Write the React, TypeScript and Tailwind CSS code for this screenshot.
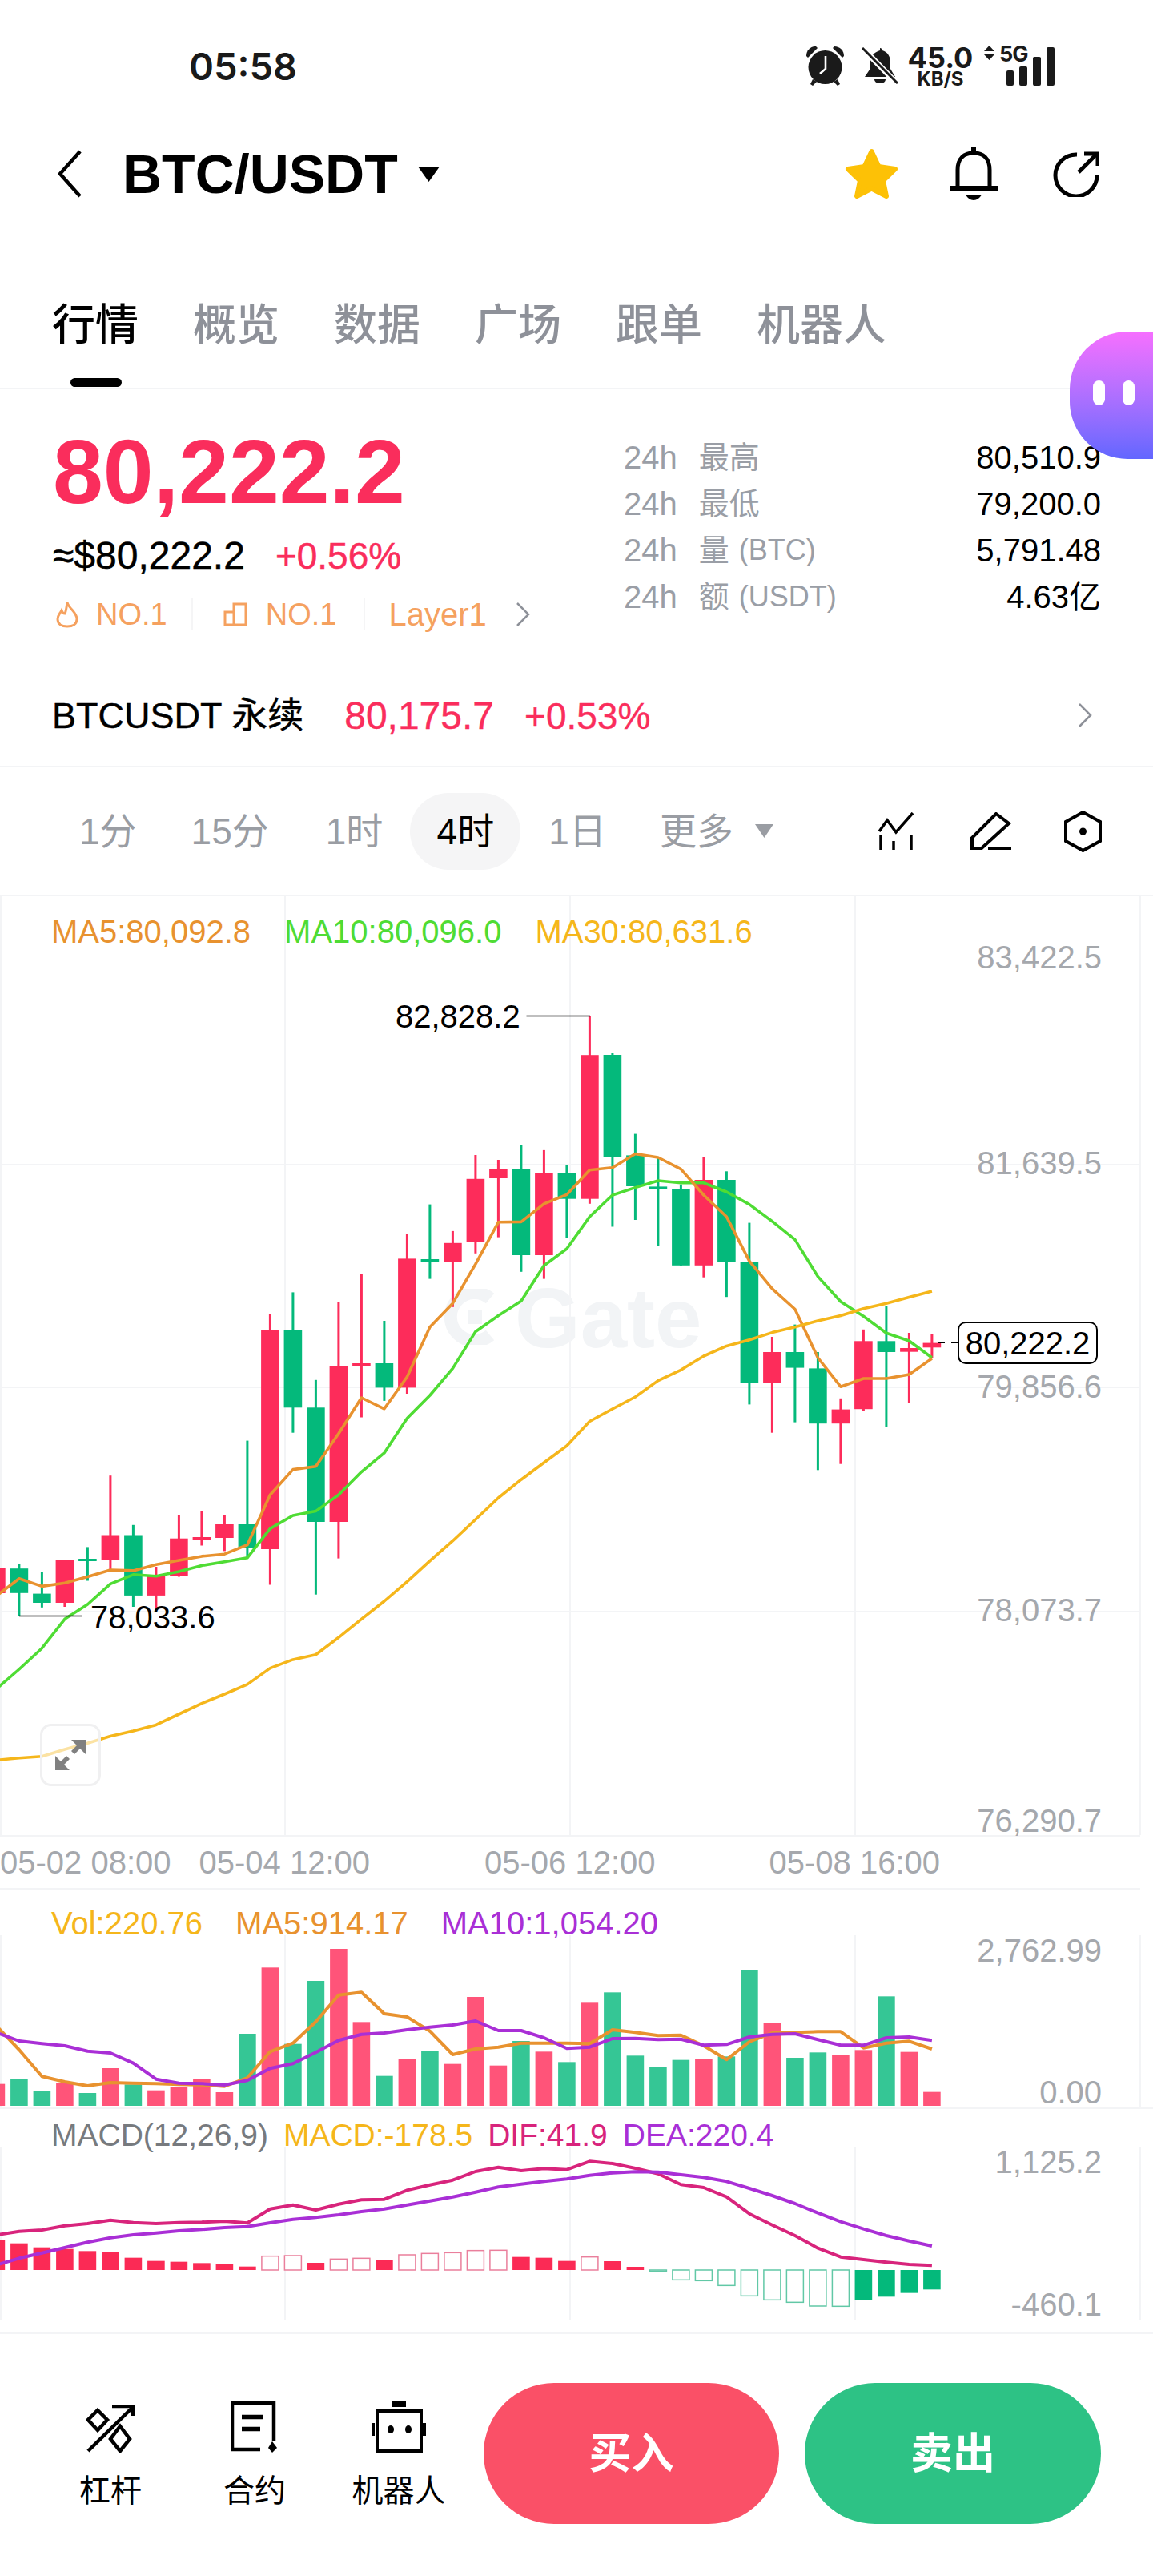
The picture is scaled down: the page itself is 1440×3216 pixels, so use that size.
import React from "react";

// candle chart data, page pixel coordinates: [up, wickTop, bodyTop, bodyBottom, wickBottom]
const candles: [number, number, number, number, number][] = [
  [1, 1959, 1959, 1990, 1990],
  [0, 1953.4, 1959.2, 1989.8, 2018.5],
  [0, 1963, 1990.6, 2002, 2007.8],
  [1, 1948.5, 1948.5, 2002, 2007],
  [0, 1932.4, 1947, 1950, 1974.5],
  [1, 1843.2, 1917.5, 1948.5, 1961],
  [0, 1904.8, 1917.5, 1992.9, 2007],
  [1, 1957, 1968.8, 1992.9, 2009],
  [1, 1893, 1921.7, 1968, 1969.5],
  [1, 1887.6, 1920, 1923, 1930.5],
  [1, 1892, 1904, 1921, 1937.4],
  [0, 1799.6, 1904, 1934, 1945.8],
  [1, 1641.2, 1661, 1935, 1979.5],
  [0, 1614.4, 1661, 1758.3, 1789.7],
  [0, 1723.8, 1758.3, 1901, 1991.7],
  [1, 1626, 1706.7, 1901, 1946.6],
  [1, 1591.9, 1703, 1706, 1770.5],
  [0, 1650, 1703, 1733.4, 1749.9],
  [1, 1542, 1572.4, 1733.4, 1741],
  [0, 1504.6, 1573, 1576, 1597.6],
  [1, 1537.9, 1552.8, 1576.6, 1632.8],
  [1, 1443, 1472.8, 1552, 1565.8],
  [1, 1449, 1461, 1472, 1545.6],
  [0, 1430.8, 1461, 1568, 1588.8],
  [1, 1436.9, 1465.2, 1568, 1597.6],
  [0, 1455.6, 1465.2, 1497.7, 1546.7],
  [1, 1269.3, 1318.2, 1497.7, 1503.8],
  [0, 1315, 1318, 1445, 1532.5],
  [0, 1416.6, 1443.4, 1482, 1524],
  [0, 1445, 1482.4, 1485.5, 1556],
  [0, 1479.7, 1485.9, 1580.8, 1580.8],
  [1, 1445.7, 1474, 1580.8, 1595.7],
  [0, 1463.3, 1474, 1576, 1620.2],
  [0, 1527.6, 1576.2, 1727.7, 1754.4],
  [1, 1670, 1689, 1727.7, 1789.7],
  [0, 1654.6, 1689, 1708.6, 1776.6],
  [0, 1689, 1709.4, 1778.2, 1836.3],
  [1, 1746.8, 1760.6, 1778.2, 1828.7],
  [1, 1660.8, 1675.3, 1760.2, 1762.9],
  [0, 1632, 1675.3, 1689, 1782],
  [1, 1665, 1684, 1688.7, 1752.5],
  [1, 1666.5, 1677.6, 1683.3, 1696],
];

const ma5 = [1993.6,1971.8,1981.4,1977.2,1969.5,1961,1961.9,1954.2,1948.9,1943.9,1941.2,1929.7,1867.3,1835.6,1831.7,1790.8,1746,1759.8,1720,1657.7,1628.2,1579.2,1526.8,1526.4,1503.8,1492.4,1461.7,1458.7,1441.5,1446,1460.6,1493,1520,1575.4,1609.9,1635.5,1696,1732.2,1722,1722,1717,1697];
const ma10 = [2109.6,2085,2058.7,2022.3,2004,1978.3,1966.8,1968.8,1963,1955.4,1950.8,1945.8,1909.4,1893,1887.6,1867.3,1838.6,1814.9,1771.7,1743,1709.4,1663.4,1643.5,1625.2,1581,1560,1520,1493,1483.6,1475,1477.8,1477.8,1489,1504.6,1525.7,1548.6,1594.6,1626,1644.3,1665.3,1675,1696];
const ma30 = [2198.4,2195.7,2193.8,2185,2177.3,2168.5,2162,2154.4,2141,2127.6,2116,2103.9,2083.6,2072.9,2066.7,2045.3,2022.3,2000,1975.6,1949.6,1924.7,1898,1871,1848.2,1827,1806,1775.5,1760,1745,1724.6,1711.3,1694,1681.4,1673.8,1664.6,1657.7,1650,1643.5,1634.7,1628.2,1620.6,1613];

// volume panel, y = 2320 + v / 3
const volBars = [848,828,873,846,882,789,850,872,861,829,879,660,412,698,462,342,616,818,756,723,773,522,779,687,727,766,544,505,742,786,758,756,745,422,619,750,730,740,721,520,728,878];
const volMa5 = [630,720,820,840,855,843,845,847,850,851,857,825,727,695,615,515,505,585,597,650,738,717,710,695,695,695,697,645,655,667,665,705,757,690,657,655,652,652,713,695,688,717];
const volMa10 = [655,687,697,705,725,732,770,830,845,847,852,835,790,772,730,685,662,657,645,635,627,612,648,648,675,715,710,678,677,682,680,703,700,672,662,660,682,703,703,675,672,685];

// macd panel, y = 2630 + v / 3, [value, hollow]
const macdBars: [number, number][] = [[497,0],[509,0],[524,0],[530,0],[538,0],[543,0],[563,0],[575,0],[578,0],[583,0],[585,0],[596,0],[557,1],[555,1],[582,0],[568,1],[565,1],[572,0],[552,1],[547,1],[544,1],[536,1],[535,1],[560,0],[563,0],[575,0],[560,1],[576,0],[597,0],[614,1],[646,1],[649,1],[667,1],[706,1],[721,1],[730,1],[744,1],[745,1],[723,0],[709,0],[695,0],[682,0]];
const dif = [478,464,459,443,435,422,431,435,431,430,426,433,380,365,384,362,346,344,310,290,272,240,224,237,229,233,202,210,228,248,289,300,335,398,440,480,527,560,570,580,588,592];
const dea = [590,565,545,525,505,488,477,470,462,457,450,446,432,419,412,402,390,380,365,350,335,317,298,287,277,268,254,245,241,242,252,262,277,303,330,360,395,428,455,480,500,519];

const RED = "#fd2c5a";
const GREEN = "#04b97b";
const X = (k: number) => 23.9 + 28.5 * (k - 1);
const pts = (ys: number[], base = 0, scale = 1) =>
  ys.map((v, k) => `${X(k).toFixed(1)},${(base + v * scale).toFixed(1)}`).join(" ");

const Grid: React.FC<{ top: number; bottom: number; rows?: number[] }> = ({ top, bottom, rows = [] }) => (
  <g stroke="#f3f4f6" strokeWidth="2">
    {[1, 356, 712, 1068, 1424].map((x) => (
      <line key={x} x1={x} x2={x} y1={top} y2={bottom} />
    ))}
    {rows.map((y) => (
      <line key={y} x1={0} x2={1424} y1={y} y2={y} />
    ))}
  </g>
);

const KlineChart = () => (
  <svg width="1440" height="1172" viewBox="0 1120 1440 1172" className="block">
    <Grid top={1120} bottom={2292} rows={[1455, 1733, 2013]} />
    {candles.map(([up, wt, bt, bb, wb], k) => {
      const c = up ? RED : GREEN;
      return (
        <g key={k} fill={c}>
          <rect x={X(k) - 1.5} y={wt} width="3" height={wb - wt} />
          <rect x={X(k) - 11.3} y={bt} width="22.6" height={bb - bt} />
        </g>
      );
    })}
    <polyline points={pts(ma10)} fill="none" stroke="#4fdc34" strokeWidth="3.6" strokeLinejoin="round" />
    <polyline points={pts(ma5)} fill="none" stroke="#e8922f" strokeWidth="3.6" strokeLinejoin="round" />
    <polyline points={pts(ma30)} fill="none" stroke="#f5b61b" strokeWidth="3.6" strokeLinejoin="round" />
    <path d="M737 1269.5H657.5" stroke="#000" strokeWidth="1.6" fill="none" />
    <path d="M24 2018.5H103" stroke="#000" strokeWidth="1.6" fill="none" />
    <path d="M1172 1677H1196" stroke="#000" strokeWidth="2" strokeDasharray="8 8" />
  </svg>
);

const VolumeChart = () => (
  <svg width="1440" height="272" viewBox="0 2360 1440 272" className="block">
    <Grid top={2417} bottom={2632} />
    {volBars.map((v, k) => (
      <rect key={k} x={X(k) - 10.8} y={2320 + v / 3} width="21.6" height={2630 - (2320 + v / 3)} fill={candles[k][0] ? "#ff5479" : "#35c695"} />
    ))}
    <polyline points={pts(volMa5, 2320, 1 / 3)} fill="none" stroke="#e8922f" strokeWidth="4" strokeLinejoin="round" />
    <polyline points={pts(volMa10, 2320, 1 / 3)} fill="none" stroke="#a92fd6" strokeWidth="4" strokeLinejoin="round" />
  </svg>
);

const MacdChart = () => (
  <svg width="1440" height="263" viewBox="0 2632 1440 263" className="block">
    <Grid top={2680} bottom={2895} />
    {macdBars.map(([v, hollow], k) => {
      const y = 2630 + v / 3;
      const zero = 2833;
      const top = Math.min(y, zero);
      const h = Math.abs(y - zero);
      const up = y < zero;
      return hollow ? (
        <rect key={k} x={X(k) - 10.5} y={top} width="21" height={Math.max(h, 1)} fill="#fff" stroke={up ? "#ea7f9c" : "#62c8a6"} strokeWidth="1.5" />
      ) : (
        <rect key={k} x={X(k) - 10.8} y={top} width="21.6" height={h} fill={up ? "#fb2a55" : GREEN} />
      );
    })}
    <polyline points={pts(dif, 2630, 1 / 3)} fill="none" stroke="#d8247c" strokeWidth="4" strokeLinejoin="round" />
    <polyline points={pts(dea, 2630, 1 / 3)} fill="none" stroke="#a92fd6" strokeWidth="4" strokeLinejoin="round" />
  </svg>
);

const StatRow: React.FC<{ label: string; unit?: string; value: string }> = ({ label, unit, value }) => (
  <div className="flex h-[58px] items-center justify-between text-[40px] leading-[58px]">
    <div className="flex text-[#9a9ea6]">
      <span>24h</span>
      <span className="ml-[27px] text-[38px]">{label}</span>
      {unit && <span className="ml-[12px] text-[36px]">{unit}</span>}
    </div>
    <span className="text-black">{value}</span>
  </div>
);

const ToolItem: React.FC<{ label: string; children: React.ReactNode }> = ({ label, children }) => (
  <div className="flex w-[180px] flex-col items-center">
    <div className="flex h-[66px] items-start">{children}</div>
    <span className="mt-[26px] text-[39px] leading-[40px] text-black">{label}</span>
  </div>
);

export default function App() {
  return (
    <div className="relative h-[3216px] w-[1440px] overflow-hidden bg-white font-['Liberation_Sans','Noto_Sans_CJK_SC',sans-serif] text-black">
      {/* Status bar */}
      <div className="flex h-[164px] items-center justify-between pl-[236px] pr-[123px] text-[#1a1a1a]">
        <span className="font-['Inter',sans-serif] text-[47px] font-semibold leading-none">05:58</span>
        <div className="flex items-center">
          <svg width="49" height="50" viewBox="0 0 49 50" fill="#1a1a1a">
            <circle cx="24.5" cy="27" r="21" />
            <path d="M1 13C1 6 6 1 13 1L15 3 3 15Z" />
            <path d="M48 13C48 6 43 1 36 1L34 3 46 15Z" />
            <path d="M9 42 6 48 9 50 14 45ZM40 42 43 48 40 50 35 45Z" />
            <path d="M25 13V29L18 35" fill="none" stroke="#fff" strokeWidth="2.6" />
          </svg>
          <svg width="46" height="46" viewBox="0 0 46 46" fill="#1a1a1a" className="ml-[21px]">
            <path d="M23 1c2 0 3 2 3 3 7 2 10 8 10 15v8l6 10H4l6-9v-9c0-7 6-13 13-15Z" />
            <path d="M16 40h14c0 3-3 5-7 5s-7-2-7-5Z" />
            <path d="M3 3 43 44" stroke="#fff" strokeWidth="7" />
            <path d="M1 1 45 45" stroke="#1a1a1a" strokeWidth="3" />
          </svg>
          <div className="ml-[14px] flex w-[77px] flex-col items-center font-['Inter',sans-serif] font-bold">
            <span className="text-[36px] leading-[30px]">45.0</span>
            <span className="mt-[2px] text-[24px] leading-[19px]">KB/S</span>
          </div>
          <div className="relative ml-[16px] h-[50px] w-[88px]">
            <svg width="13" height="18" viewBox="0 0 13 18" fill="#1a1a1a" className="absolute left-0 top-0">
              <path d="M6.5 0 13 7H0ZM0 11H13L6.5 18Z" />
            </svg>
            <span className="absolute left-[19px] top-[-3px] font-['Inter',sans-serif] text-[27px] font-bold leading-[28px] tracking-[-1px]">5G</span>
            <div className="absolute bottom-0 left-[28px] flex items-end gap-[7px]">
              <div className="h-[19px] w-[9px] rounded-[2px] bg-[#1a1a1a]" />
              <div className="h-[24px] w-[10px] rounded-[2px] bg-[#1a1a1a]" />
              <div className="h-[36px] w-[10px] rounded-[2px] bg-[#1a1a1a]" />
              <div className="h-[48px] w-[10px] rounded-[2px] bg-[#1a1a1a]" />
            </div>
          </div>
        </div>
      </div>

      {/* Title */}
      <div className="flex h-[106px] items-center pl-[71px] pr-[67px]">
        <svg width="32" height="60" viewBox="0 0 32 60" fill="none" stroke="#000" strokeWidth="4.5">
          <path d="M29 2 4 30 29 58" />
        </svg>
        <span className="ml-[50px] text-[68px] font-bold leading-none">BTC/USDT</span>
        <svg width="27" height="19" viewBox="0 0 27 19" className="ml-[25px]">
          <path d="M0 0H27L13.5 19Z" fill="#000" />
        </svg>
        <div className="ml-auto flex items-center">
          <svg width="67" height="64" viewBox="0 0 67 64" fill="#fdc106" stroke="#fdc106" strokeWidth="6" strokeLinejoin="round">
            <path d="M33.5 4 42.5 23 63 26 48 40.5 52 60 33.5 50.5 15 60 19 40.5 4 26 24.5 23Z" />
          </svg>
          <svg width="60" height="66" viewBox="0 0 60 66" className="ml-[64px]">
            <rect x="27" y="0" width="6" height="8" />
            <path d="M10 49V28C10 14 18 7 30 7S50 14 50 28V49" fill="none" stroke="#000" strokeWidth="5" />
            <rect x="0" y="48" width="60" height="6" />
            <path d="M20 59H40C38 63 34 66 30 66S22 63 20 59Z" />
          </svg>
          <svg width="58" height="58" viewBox="0 0 58 58" fill="none" stroke="#000" strokeWidth="5" className="ml-[69px]">
            <path d="M30 5A26 26 0 1 0 55 31" />
            <path d="M32 27 55 4" />
            <path d="M39 4H56V19" />
          </svg>
        </div>
      </div>

      {/* Tabs */}
      <div className="flex gap-[68px] border-b-2 border-[#f3f4f6] pl-[65px] pt-[106px] text-[54px] font-medium leading-[60px] text-[#8e9199]">
        <div className="relative h-[108px] text-black">
          行情
          <div className="absolute left-[23px] top-[96px] h-[11px] w-[64px] rounded-full bg-black" />
        </div>
        <div>概览</div>
        <div>数据</div>
        <div>广场</div>
        <div>跟单</div>
        <div>机器人</div>
      </div>

      {/* Price block */}
      <div className="flex h-[360px] pl-[66px] pr-[65px] pt-[47px]">
        <div className="w-[713px]">
          <div className="text-[113px] font-bold leading-[112px] text-[#fa2d5c]">80,222.2</div>
          <div className="mt-[25px] flex items-baseline leading-[48px] [-webkit-text-stroke:0.5px_currentColor]">
            <span className="text-[48px]">≈$80,222.2</span>
            <span className="ml-[38px] text-[46px] text-[#fa2d5c]">+0.56%</span>
          </div>
          <div className="mt-[29px] flex h-[40px] items-center text-[#f5a15f]">
            <svg width="30" height="34" viewBox="0 0 30 34" fill="none" stroke="#f5a15f" strokeWidth="3" className="ml-[3px]">
              <path d="M15 2C17 10 27 14 27 23 27 29 22 32 15 32 8 32 3 29 3 23 3 18 6 16 8 12 9 15 11 16 12 16 14 12 14 7 15 2Z" />
            </svg>
            <span className="ml-[21px] text-[38px] leading-[40px]">NO.1</span>
            <div className="ml-[30px] h-[40px] w-[2px] bg-[#f5f5f6]" />
            <svg width="30" height="30" viewBox="0 0 30 30" fill="none" stroke="#f5a15f" strokeWidth="3" className="ml-[38px]">
              <path d="M13 2H28V28H2V12H13ZM13 12V28" />
            </svg>
            <span className="ml-[23px] text-[38px] leading-[40px]">NO.1</span>
            <div className="ml-[34px] h-[40px] w-[2px] bg-[#f5f5f6]" />
            <span className="ml-[29px] text-[40px] leading-[40px]">Layer1</span>
            <svg width="18" height="30" viewBox="0 0 18 30" fill="none" stroke="#8e9199" strokeWidth="2.5" className="ml-[36px]">
              <path d="M2 1 16 15 2 29" />
            </svg>
          </div>
        </div>
        <div className="mt-[9px] w-[596px]">
          <StatRow label="最高" value="80,510.9" />
          <StatRow label="最低" value="79,200.0" />
          <StatRow label="量" unit="(BTC)" value="5,791.48" />
          <StatRow label="额" unit="(USDT)" value="4.63亿" />
        </div>
      </div>

      {/* Perpetual row */}
      <div className="flex h-[112px] items-start border-b-2 border-[#f3f4f6] pl-[65px] pr-[76px] pt-[22px] leading-[52px] [-webkit-text-stroke:0.4px_currentColor]">
        <span className="text-[45px]">BTCUSDT 永续</span>
        <span className="ml-[51px] text-[48px] text-[#fa2d5c]">80,175.7</span>
        <span className="ml-[38px] text-[46px] text-[#fa2d5c]">+0.53%</span>
        <svg width="18" height="30" viewBox="0 0 18 30" fill="none" stroke="#8e9199" strokeWidth="2.5" className="ml-auto mt-[10px]">
          <path d="M2 1 16 15 2 29" />
        </svg>
      </div>

      {/* Intervals */}
      <div className="flex h-[161px] items-center border-b-2 border-[#f3f4f6] pl-[99px] pr-[64px] text-[46px] leading-[60px] text-[#9a9da3]">
        <span>1分</span>
        <span className="ml-[68px]">15分</span>
        <span className="ml-[71px]">1时</span>
        <span className="ml-[34px] flex h-[96px] w-[138px] items-center justify-center rounded-full bg-[#f5f5f6] text-black">4时</span>
        <span className="ml-[35px]">1日</span>
        <span className="ml-[67px]">更多</span>
        <svg width="23" height="17" viewBox="0 0 23 17" className="ml-[27px]">
          <path d="M0 0H23L11.5 17Z" fill="#9a9da3" />
        </svg>
        <div className="ml-auto flex items-center">
          <svg width="46" height="47" viewBox="0 0 46 47" fill="none" stroke="#000" strokeWidth="3.5">
            <path d="M1 24 11 10 22 25 43 1" />
            <path d="M3 29V47M19 36V47M41 29V47" />
          </svg>
          <svg width="51" height="47" viewBox="0 0 51 47" fill="none" stroke="#000" strokeWidth="4" className="ml-[69px]">
            <path d="M2 45V32L32 2 48 14 14 45Z" />
            <path d="M22 45H51" />
          </svg>
          <svg width="47" height="52" viewBox="0 0 47 52" fill="none" stroke="#000" strokeWidth="4" className="ml-[66px]">
            <path d="M23.5 2 45 14V38L23.5 50 2 38V14Z" />
            <circle cx="23.5" cy="26" r="4.5" fill="#000" stroke="none" />
          </svg>
        </div>
      </div>

      {/* Candles */}
      <div className="relative h-[1172px] w-[1440px]">
        <div className="absolute left-[643px] top-[477px] text-[105px] font-bold leading-[100px] text-[#f2f4f6]">Gate</div>
        <svg width="90" height="70" viewBox="0 0 90 70" fill="none" className="absolute left-[546px] top-[490px]">
          <path d="M66 12A30 30 0 1 0 66 58" stroke="#f2f4f6" strokeWidth="16" />
          <rect x="38" y="26" width="18" height="18" fill="#f2f4f6" />
        </svg>
        <div className="absolute inset-0">
          <KlineChart />
        </div>
        <div className="absolute left-[64px] top-[24px] flex gap-[42px] text-[40px] leading-[40px]">
          <span className="text-[#e8922f]">MA5:80,092.8</span>
          <span className="text-[#4fdc34]">MA10:80,096.0</span>
          <span className="text-[#f5b61b]">MA30:80,631.6</span>
        </div>
        <span className="absolute left-[494px] top-[130px] text-[40px] leading-[40px]">82,828.2</span>
        <span className="absolute left-[113px] top-[880px] text-[40px] leading-[40px]">78,033.6</span>
        <span className="absolute right-[64px] top-[56px] text-[40px] leading-[40px] text-[#a5a8ad]">83,422.5</span>
        <span className="absolute right-[64px] top-[313px] text-[40px] leading-[40px] text-[#a5a8ad]">81,639.5</span>
        <span className="absolute right-[64px] top-[592px] text-[40px] leading-[40px] text-[#a5a8ad]">79,856.6</span>
        <span className="absolute right-[64px] top-[871px] text-[40px] leading-[40px] text-[#a5a8ad]">78,073.7</span>
        <span className="absolute right-[64px] top-[1134px] text-[40px] leading-[40px] text-[#a5a8ad]">76,290.7</span>
        <div className="absolute left-[1196px] top-[531px] flex h-[53px] w-[175px] items-center justify-center rounded-[10px] border-2 border-black bg-white text-[40px] leading-[40px]">
          80,222.2
        </div>
        <div className="absolute left-[50px] top-[1033px] flex h-[78px] w-[76px] items-center justify-center rounded-[14px] border-[3px] border-[#f0f0f1] bg-white/60">
          <svg width="38" height="38" viewBox="0 0 38 38" fill="#808080">
            <path d="M20 0H38V18L31 11 24 18 20 14 27 7Z" />
            <path d="M0 38V20L7 27 14 20 18 24 11 31 18 38Z" />
          </svg>
        </div>
      </div>

      {/* Dates */}
      <div className="flex h-[68px] w-[1424px] items-center border-y-2 border-[#f3f4f6] text-[40px] leading-[40px] text-[#a5a8ad]">
        <span>05-02 08:00</span>
        <span className="ml-[35px]">05-04 12:00</span>
        <span className="ml-[143px]">05-06 12:00</span>
        <span className="ml-[142px]">05-08 16:00</span>
      </div>

      {/* Volume */}
      <div className="relative h-[272px] w-[1440px]">
        <div className="absolute inset-0">
          <VolumeChart />
        </div>
        <div className="absolute left-[64px] top-[22px] flex gap-[41px] text-[40px] leading-[40px]">
          <span className="text-[#f5b61b]">Vol:220.76</span>
          <span className="text-[#e8922f]">MA5:914.17</span>
          <span className="text-[#a92fd6]">MA10:1,054.20</span>
        </div>
        <span className="absolute right-[64px] top-[56px] text-[40px] leading-[40px] text-[#a5a8ad]">2,762.99</span>
        <span className="absolute right-[64px] top-[233px] text-[40px] leading-[40px] text-[#a5a8ad]">0.00</span>
      </div>

      {/* MACD */}
      <div className="relative h-[263px] w-[1440px] border-t-2 border-[#f3f4f6]">
        <div className="absolute inset-0">
          <MacdChart />
        </div>
        <div className="absolute left-[64px] top-[13px] flex gap-[19px] text-[39px] leading-[40px]">
          <span className="text-[#777a7e]">MACD(12,26,9)</span>
          <span className="text-[#f5b61b]">MACD:-178.5</span>
          <span className="text-[#d8247c]">DIF:41.9</span>
          <span className="text-[#a92fd6]">DEA:220.4</span>
        </div>
        <span className="absolute right-[64px] top-[46px] text-[40px] leading-[40px] text-[#a5a8ad]">1,125.2</span>
        <span className="absolute right-[64px] top-[224px] text-[40px] leading-[40px] text-[#a5a8ad]">-460.1</span>
      </div>

      {/* Bottom bar */}
      <div className="mt-[18px] flex border-t-2 border-[#f3f4f6] pl-[48px] pt-[61px]">
        <div className="flex pt-[23px]">
          <ToolItem label="杠杆">
            <svg width="60" height="60" viewBox="0 0 60 60" fill="none" stroke="#000" strokeWidth="4.5" className="mt-[4px]">
              <path d="M2 58 57 4" />
              <path d="M32 2H58V14" />
              <path d="M14 7 26 19 14 32 2 19Z" />
              <path d="M42 27 54 43 42 58 30 43Z" />
            </svg>
          </ToolItem>
          <ToolItem label="合约">
            <svg width="60" height="64" viewBox="0 0 60 64" fill="none" stroke="#000" strokeWidth="4.5">
              <path d="M37 60H2V2H54V49" />
              <path d="M14 19.5H41M14 34.5H37" strokeWidth="5.5" />
              <path d="M52 50 58 58 52 64 47 58Z" fill="#000" stroke="none" />
            </svg>
          </ToolItem>
          <ToolItem label="机器人">
            <svg width="68" height="64" viewBox="0 0 68 64" fill="none" stroke="#000" strokeWidth="4">
              <rect x="26" y="0" width="17" height="7" fill="#000" stroke="none" />
              <rect x="7" y="12" width="55" height="50" />
              <path d="M2 27V43M66 27V43" strokeWidth="4" />
              <ellipse cx="24" cy="35" rx="4" ry="5" fill="#000" stroke="none" />
              <ellipse cx="46" cy="35" rx="4" ry="5" fill="#000" stroke="none" />
            </svg>
          </ToolItem>
        </div>
        <div className="ml-[16px] flex h-[176px] w-[369px] items-center justify-center rounded-full bg-[#fa5067] text-[53px] font-bold leading-none text-white">
          买入
        </div>
        <div className="ml-[32px] flex h-[176px] w-[370px] items-center justify-center rounded-full bg-[#2dc285] text-[53px] font-bold leading-none text-white">
          卖出
        </div>
      </div>

      {/* Floating assistant */}
      <div className="absolute left-[1336px] top-[414px] h-[159px] w-[104px] rounded-l-[72px] bg-gradient-to-b from-[#f66fff] to-[#6266ff]">
        <div className="absolute left-[29px] top-[61px] h-[31px] w-[15px] rounded-full bg-white" />
        <div className="absolute left-[66px] top-[61px] h-[31px] w-[15px] rounded-full bg-white" />
      </div>
    </div>
  );
}
